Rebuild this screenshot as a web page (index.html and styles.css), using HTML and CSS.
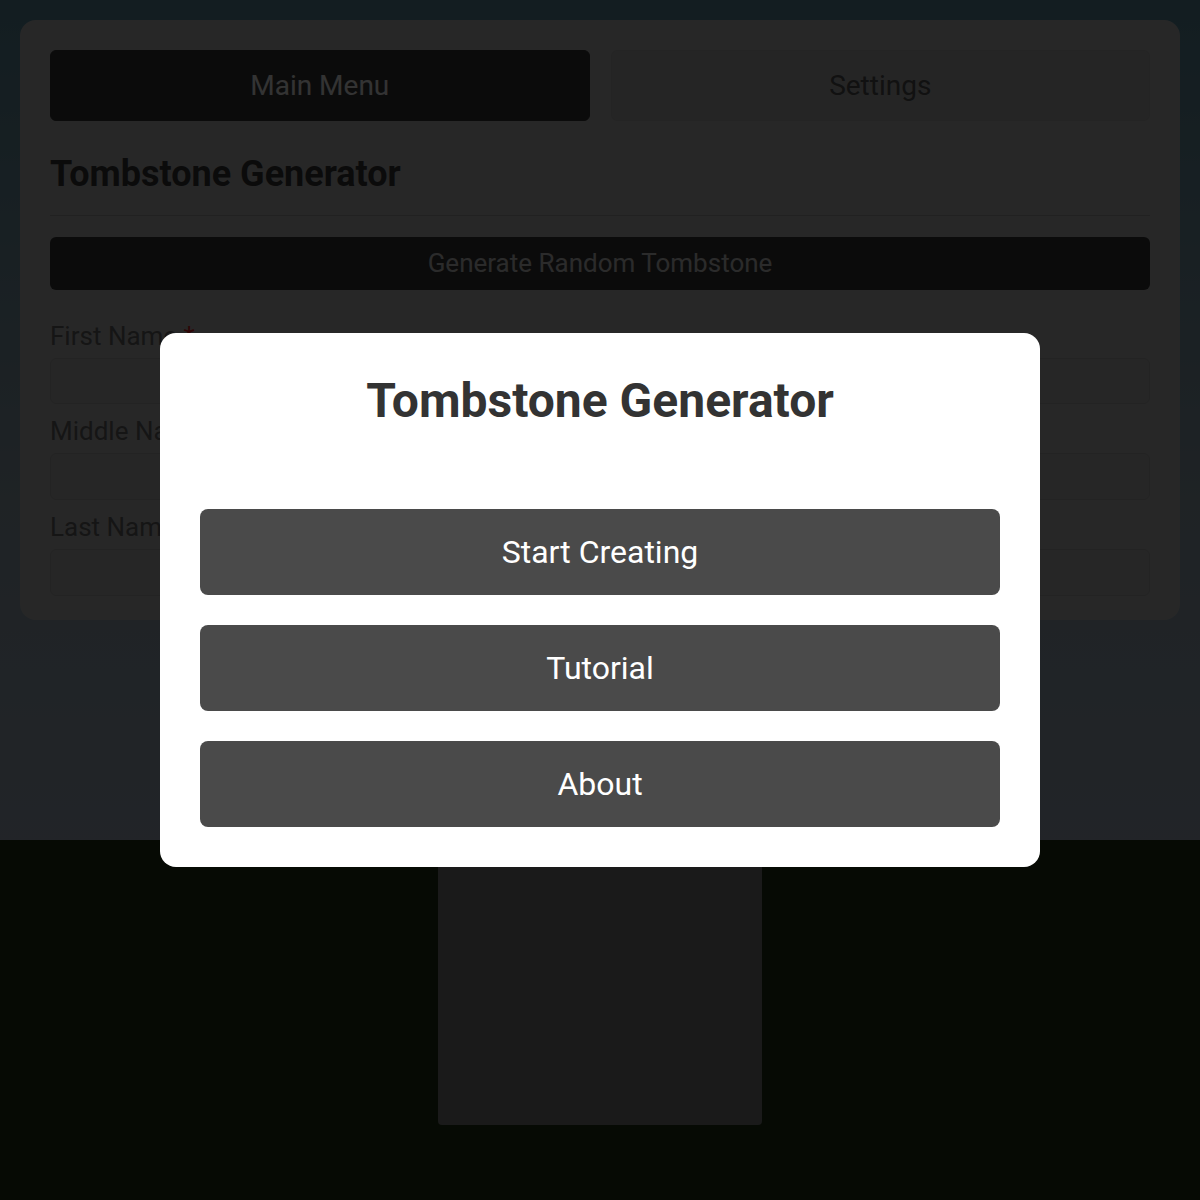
FILE: index.html
```html
<!DOCTYPE html>
<html lang="en">
<head>
  <meta charset="UTF-8">
  <meta name="viewport" content="width=device-width, initial-scale=1.0">
  <title>Tombstone Generator</title>
  <link rel="stylesheet" href="styles.css">
</head>
<body>

<div class="scene">
  <div class="sky"></div>
  <div class="ground"></div>
  <div class="tombstone"></div>
</div>

<div class="ui-panel">
  <div class="tabs">
    <button class="tab active">Main Menu</button>
    <button class="tab">Settings</button>
  </div>
  <h2 class="panel-title">Tombstone Generator</h2>
  <button class="random-btn">Generate Random Tombstone</button>

  <label for="firstName">First Name <span class="required">*</span></label>
  <input type="text" id="firstName">

  <label for="middleName">Middle Name</label>
  <input type="text" id="middleName">

  <label for="lastName">Last Name</label>
  <input type="text" id="lastName">
</div>

<!-- Startmenü -->
<div class="overlay">
  <div class="modal">
    <h1>Tombstone Generator</h1>
    <div class="modal-buttons">
      <button>Start Creating</button>
      <button>Tutorial</button>
      <button>About</button>
    </div>
  </div>
</div>

</body>
</html>
```

FILE: styles.css
```css
body {
    font-family: 'Roboto', sans-serif;
    margin: 0;
    height: 100vh;
    overflow: hidden;
}
.scene {
    position: relative;
    display: flex;
    flex-direction: column;
    height: 100vh;
}
.sky {
    height: 840px;
    background: linear-gradient(to bottom, #5f92a6 0%, #9aaebb 60%, #a8b6c6 100%);
}
.ground {
    flex: 1;
    background: #1f3316;
}
.tombstone {
    position: absolute;
    left: 438px;
    top: 700px;
    width: 324px;
    height: 425px;
    background: #828282;
    border-radius: 60px 60px 4px 4px;
}
.ui-panel {
    position: absolute;
    top: 20px;
    left: 20px;
    right: 20px;
    box-sizing: border-box;
    height: 600px;
    padding: 30px 30px 24px;
    background: #c4c4c4;
    border-radius: 16px;
    display: flex;
    flex-direction: column;
}
.tabs {
    display: flex;
    gap: 21px;
}
.tab {
    flex: 1;
    height: 71px;
    border: 1px solid #b4b4b4;
    border-radius: 6px;
    background: #bababa;
    color: #555;
    font-family: 'Roboto', sans-serif;
    font-size: 28px;
}
.tab.active {
    background: #373737;
    border-color: #373737;
    color: #fff;
}
.panel-title {
    margin: 32px 0 0;
    padding-bottom: 20px;
    border-bottom: 1px solid #a6a6a6;
    font-size: 36px;
    line-height: 42px;
    color: #3a3a3a;
}
.random-btn {
    margin-top: 21px;
    height: 53px;
    border: none;
    border-radius: 6px;
    background: #373737;
    color: #d8d8d8;
    font-family: 'Roboto', sans-serif;
    font-size: 26px;
}
.ui-panel label {
    margin: 12px 0 7px;
    font-size: 26px;
    line-height: 30px;
    color: #6a6a6a;
}
.ui-panel .random-btn + label {
    margin-top: 31px;
}
.required {
    color: #e02222;
}
.ui-panel input {
    height: 47px;
    box-sizing: border-box;
    border: 1px solid #b0b0b0;
    border-radius: 6px;
    background: #bebebe;
}
.overlay {
    position: fixed;
    inset: 0;
    background: rgba(0, 0, 0, 0.8);
    display: flex;
    align-items: center;
    justify-content: center;
}
.modal {
    width: 880px;
    box-sizing: border-box;
    padding: 40px;
    background: #fff;
    border-radius: 16px;
}
.modal h1 {
    margin: 0 0 80px;
    text-align: center;
    font-size: 48px;
    line-height: 56px;
    color: #333;
}
.modal-buttons {
    display: flex;
    flex-direction: column;
    gap: 30px;
}
.modal-buttons button {
    height: 86px;
    border: none;
    border-radius: 8px;
    background: #4a4a4a;
    color: #fff;
    font-family: 'Roboto', sans-serif;
    font-size: 32px;
}
```
